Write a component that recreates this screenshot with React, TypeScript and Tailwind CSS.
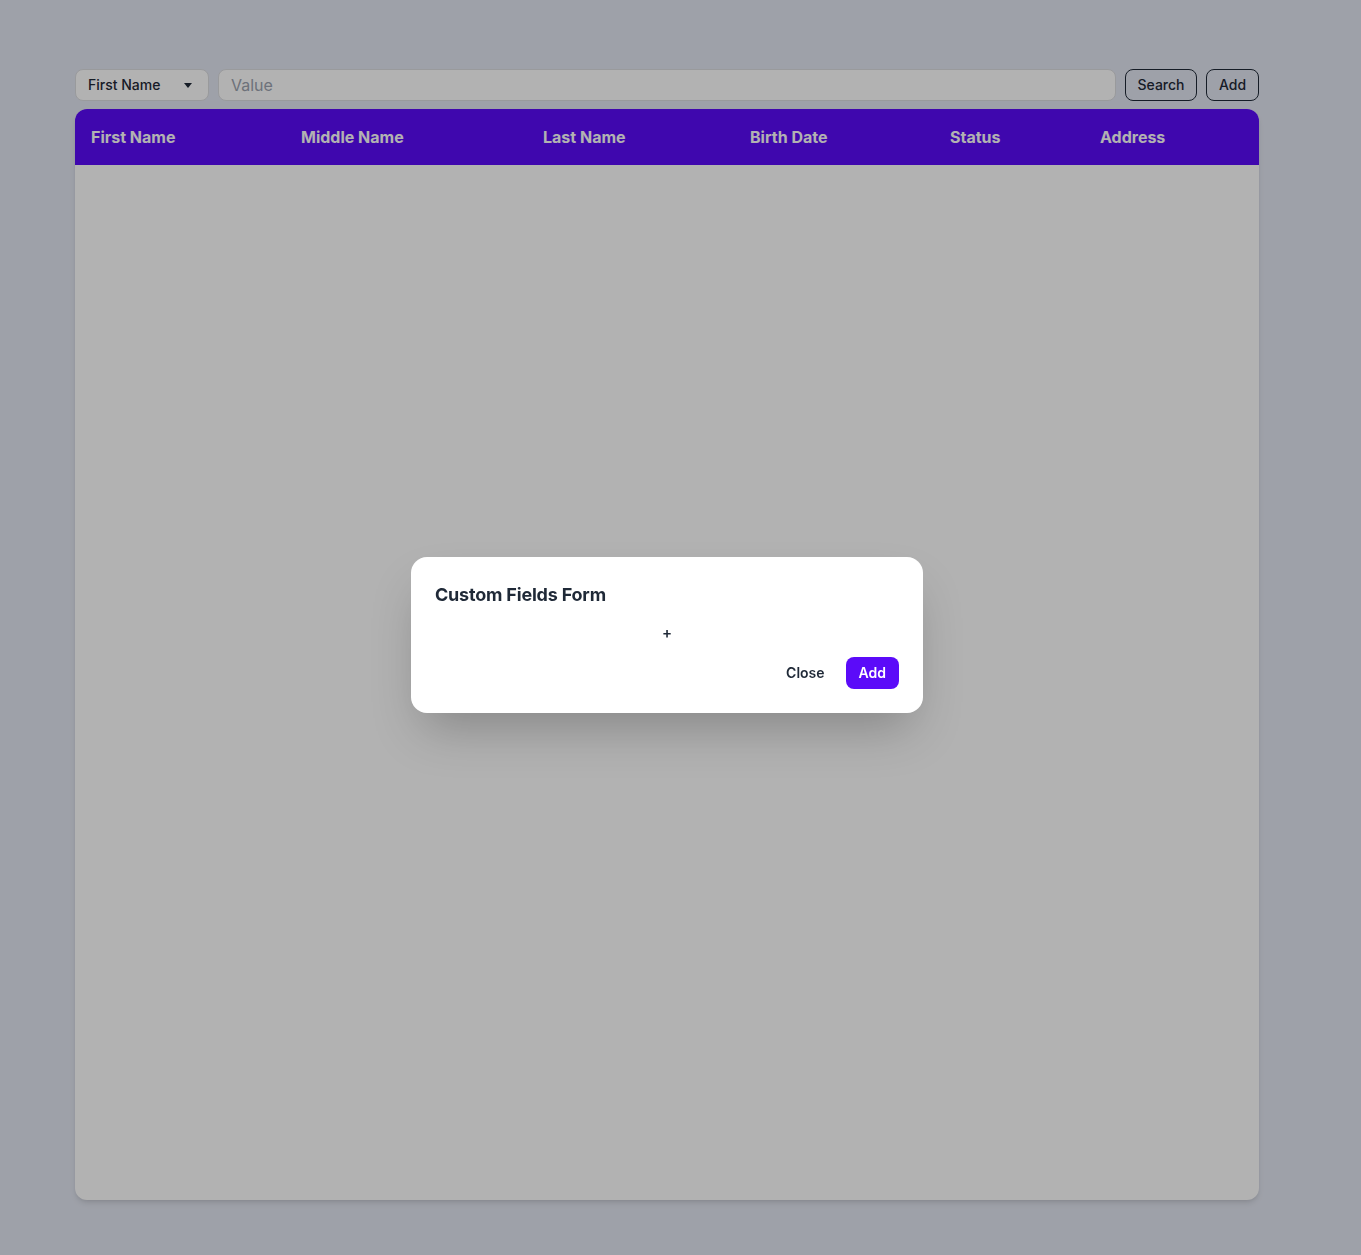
import React from "react";

const cols = ["First Name", "Middle Name", "Last Name", "Birth Date", "Status", "Address"];

export default function App() {
  return (
    <div className="min-h-screen bg-[#e3e7f2] pt-[69px] font-['Inter',sans-serif]">
      <div className="relative mx-[75px] w-[1184px]">
        <div className="flex h-8 items-center gap-[9px]">
          <button className="flex h-8 w-[134px] items-center justify-between rounded-lg border border-[#dcdde0] bg-white pl-[12px] pr-[16px] text-sm font-medium text-[#1f2937]">
            <span>First Name</span>
            <svg width="8" height="5" viewBox="0 0 8 5">
              <path d="M0 0h8L4 5z" fill="#1f2937" />
            </svg>
          </button>
          <input
            className="h-8 flex-1 rounded-lg border border-[#dcdde0] bg-white px-3 text-base text-[#1f2937] placeholder:text-[#9ca3af] outline-none"
            placeholder="Value"
          />
          <button className="h-8 w-[72px] rounded-lg border border-[#1f2937] text-sm font-medium text-[#1f2937]">
            Search
          </button>
          <button className="h-8 w-[53px] rounded-lg border border-[#1f2937] text-sm font-medium text-[#1f2937]">
            Add
          </button>
        </div>
        <div className="mt-2 h-[1091px] overflow-hidden rounded-xl bg-white shadow-md">
          <div className="grid h-14 grid-cols-[210px_242px_207px_200px_150px_1fr] items-center bg-[#5b0bf9] pl-4 text-base font-bold text-white">
            {cols.map((c) => (
              <div key={c}>{c}</div>
            ))}
          </div>
        </div>

        <div className="fixed inset-0 bg-black/30" />
        <div className="absolute inset-0 flex items-center justify-center">
          <div className="w-[512px] rounded-2xl bg-white p-6 shadow-2xl">
            <h2 className="text-lg font-bold leading-[28px] tracking-[-0.2px] text-[#1f2937]">Custom Fields Form</h2>
            <div className="mt-[14px] flex justify-center text-[15px] font-semibold leading-5 text-[#1f2937]">+</div>
            <div className="mt-[14px] flex items-center justify-end gap-[9px]">
              <button className="h-8 px-3 text-sm font-semibold text-[#1f2937]">Close</button>
              <button className="h-8 rounded-lg bg-[#5b0bf9] px-[13px] text-sm font-semibold text-white">Add</button>
            </div>
          </div>
        </div>
      </div>
    </div>
  );
}
